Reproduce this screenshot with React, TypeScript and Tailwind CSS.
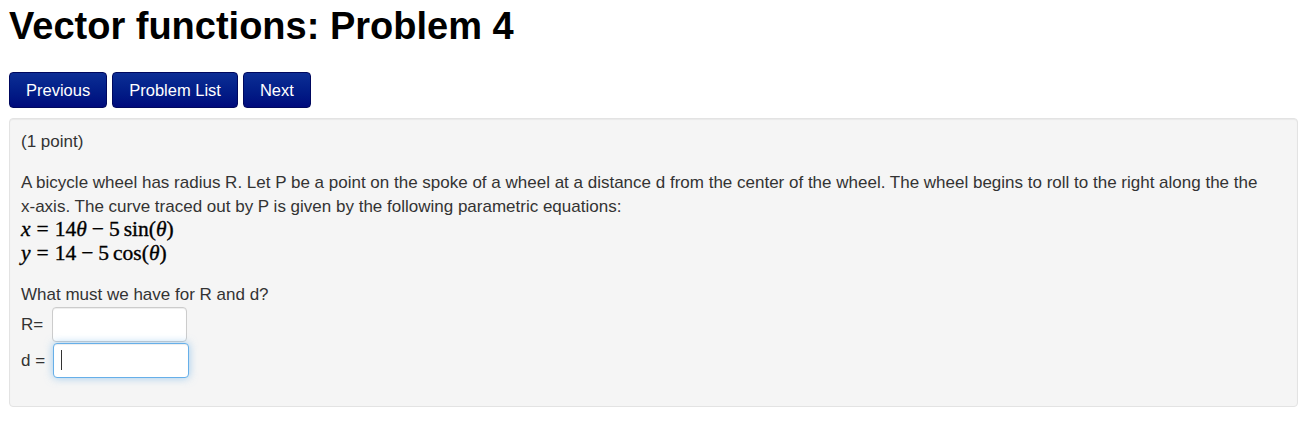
import React from "react";

const NavButton = ({ children }: { children: React.ReactNode }) => (
  <button
    type="button"
    className="h-9 px-4 rounded-[4px] border border-[#00085e] bg-gradient-to-b from-[#0d2e95] to-[#000a7c] text-white text-[16.5px] leading-none"
  >
    {children}
  </button>
);

const Eq = ({ lhs, rhs }: { lhs: string; rhs: React.ReactNode }) => (
  <div className="h-[24px] leading-[24px] text-[21.5px] text-black font-['Liberation_Serif','Times_New_Roman',serif] whitespace-nowrap [-webkit-text-stroke:0.35px_#000]">
    <i>{lhs}</i>
    <span className="mx-[6px]">=</span>
    {rhs}
  </div>
);

const Minus = () => <span className="mx-[5px]">−</span>;
const Theta = () => <i>θ</i>;

export default function App() {
  return (
    <div className="min-h-screen bg-white pl-[9px] pr-[1px] font-['Liberation_Sans',Arial,sans-serif] text-[#333]">
      <h1 className="pt-[4px] text-[38px] leading-[44px] font-bold text-black">
        Vector functions: Problem 4
      </h1>

      <div className="mt-[24px] flex gap-[5px]">
        <NavButton>Previous</NavButton>
        <NavButton>Problem List</NavButton>
        <NavButton>Next</NavButton>
      </div>

      <div className="mt-[10px] rounded-[4px] border border-[#e3e3e3] bg-[#f5f5f5] pl-[11px] pr-3 pt-[11px] pb-[28px] text-[17px] leading-[24px] shadow-[inset_0_1px_1px_rgba(0,0,0,0.05)]">
        <p>(1 point)</p>

        <p className="mt-[17px]">
          A bicycle wheel has radius R. Let P be a point on the spoke of a wheel at a distance d from the center of the
          wheel. The wheel begins to roll to the right along the the <span className="whitespace-nowrap">x-axis.</span>{" "}
          The curve traced out by P is given by the following parametric equations:
        </p>

        <div className="-mt-[2px]">
          <Eq
            lhs="x"
            rhs={
              <>
                14<Theta />
                <Minus />5<span className="ml-[4px]">sin</span>(<Theta />)
              </>
            }
          />
          <Eq
            lhs="y"
            rhs={
              <>
                14
                <Minus />5<span className="ml-[4px]">cos</span>(<Theta />)
              </>
            }
          />
        </div>

        <p className="mt-[18px]">What must we have for R and d?</p>

        <div className="flex items-center">
          <span className="w-[31px]">R=</span>
          <input
            type="text"
            className="h-[35px] w-[135px] rounded-[4px] border border-[#ccc] bg-white px-2 shadow-[inset_0_1px_1px_rgba(0,0,0,0.075)] outline-none"
          />
        </div>
        <div className="mt-[1px] flex items-center">
          <span className="w-[32px]">d =</span>
          <div className="relative">
            <input
              type="text"
              className="h-[35px] w-[136px] rounded-[4px] border border-[#66afe9] bg-white px-2 shadow-[inset_0_1px_1px_rgba(0,0,0,0.075),0_0_8px_rgba(102,175,233,0.6)] outline-none"
            />
            <span className="pointer-events-none absolute left-[8px] top-[7px] h-[20px] w-px bg-[#333]" />
          </div>
        </div>
      </div>
    </div>
  );
}
